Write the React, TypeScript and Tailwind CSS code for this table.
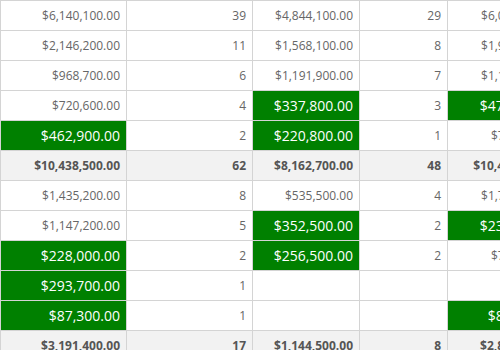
type Cell = { v: string; hi?: boolean };

type Row = { cells: Cell[]; total?: boolean };

const widths = ['w-[126px]', 'w-[126px]', 'w-[107px]', 'w-[88px]', 'w-[118px]'];

const c = (v: string, hi = false): Cell => ({ v, hi });

const rows: Row[] = [
  { cells: [c('$6,140,100.00'), c('39'), c('$4,844,100.00'), c('29'), c('$6,026,300.00')] },
  { cells: [c('$2,146,200.00'), c('11'), c('$1,568,100.00'), c('8'), c('$1,934,500.00')] },
  { cells: [c('$968,700.00'), c('6'), c('$1,191,900.00'), c('7'), c('$1,108,200.00')] },
  { cells: [c('$720,600.00'), c('4'), c('$337,800.00', true), c('3'), c('$471,600.00', true)] },
  { cells: [c('$462,900.00', true), c('2'), c('$220,800.00', true), c('1'), c('$752,400.00')] },
  { total: true, cells: [c('$10,438,500.00'), c('62'), c('$8,162,700.00'), c('48'), c('$10,493,000.00')] },
  { cells: [c('$1,435,200.00'), c('8'), c('$535,500.00'), c('4'), c('$1,711,900.00')] },
  { cells: [c('$1,147,200.00'), c('5'), c('$352,500.00', true), c('2'), c('$233,700.00', true)] },
  { cells: [c('$228,000.00', true), c('2'), c('$256,500.00', true), c('2'), c('$793,300.00')] },
  { cells: [c('$293,700.00', true), c('1'), c(''), c(''), c('')] },
  { cells: [c('$87,300.00', true), c('1'), c(''), c(''), c('$85,600.00', true)] },
  { total: true, cells: [c('$3,191,400.00'), c('17'), c('$1,144,500.00'), c('8'), c('$2,824,500.00')] },
];

export default function App() {
  return (
    <div
      className="w-[500px] h-[350px] overflow-hidden bg-white"
      style={{ fontFamily: '"Open Sans", "Noto Sans", sans-serif' }}
    >
      <div className="w-[566px] border-l border-t border-[#d4d4d4]">
        {rows.map((r, i) => (
          <div
            key={i}
            className={`flex h-[30px] ${r.total ? 'bg-[#f2f2f2]' : 'bg-white'}`}
          >
            {r.cells.map((cell, j) => (
              <div
                key={j}
                className={`${widths[j]} shrink-0 h-full flex items-center justify-end px-[6px] border-r border-b border-[#d4d4d4] whitespace-nowrap ${
                  cell.hi
                    ? 'bg-[#008000] text-white text-[14px]'
                    : r.total
                      ? 'text-[#555] text-[12px] font-bold'
                      : 'text-[#666] text-[12px]'
                }`}
              >
                {cell.v}
              </div>
            ))}
          </div>
        ))}
      </div>
    </div>
  );
}
